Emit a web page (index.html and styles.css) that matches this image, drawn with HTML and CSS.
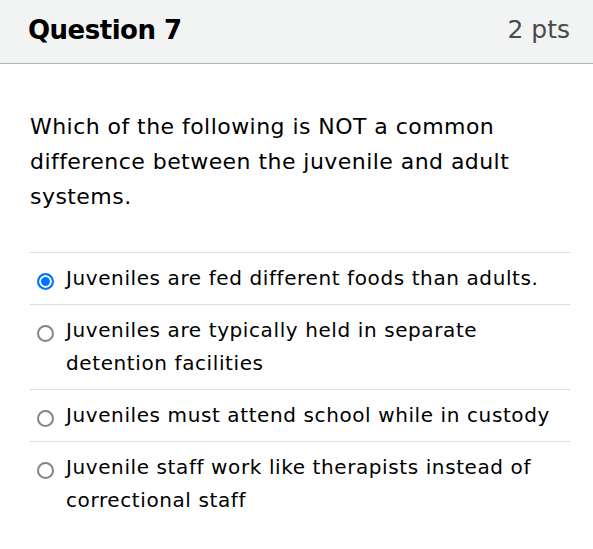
FILE: index.html
```html
<!DOCTYPE html>
<html>
<head lang="en">
    <meta charset="UTF-8">
    <title>Question 7</title>
    <link rel="stylesheet" href="styles.css">
</head>
<body>
<div class="question">
    <div class="question-header">
        <h2 class="question-title">Question 7</h2>
        <span class="question-points">2 pts</span>
    </div>
    <div class="question-body">
        <p class="question-text">Which of the following is NOT a common difference between the juvenile and adult systems.</p>
        <ul class="answers">
            <li class="answer">
                <span class="radio checked"></span>
                <span class="answer-label">Juveniles are fed different foods than adults.</span>
            </li>
            <li class="answer">
                <span class="radio"></span>
                <span class="answer-label">Juveniles are typically held in separate detention facilities</span>
            </li>
            <li class="answer">
                <span class="radio"></span>
                <span class="answer-label">Juveniles must attend school while in custody</span>
            </li>
            <li class="answer">
                <span class="radio"></span>
                <span class="answer-label">Juvenile staff work like therapists instead of correctional staff</span>
            </li>
        </ul>
    </div>
</div>
</body>
</html>
```

FILE: styles.css
```css
body {
    margin: 0;
    background: #fff;
    color: #000;
    font-family: "DejaVu Sans", sans-serif;
}
.question-header {
    height: 63px;
    background: #f2f3f3;
    border-bottom: 1px solid #b5b5b5;
    display: flex;
    align-items: center;
    justify-content: space-between;
    padding: 0 23px 0 28px;
}
.question-title {
    margin: 0;
    font-size: 26px;
    font-weight: bold;
    letter-spacing: -0.5px;
    padding-bottom: 4px;
}
.question-points {
    font-size: 25px;
    color: #4a4a4a;
    padding-bottom: 4px;
}
.question-body {
    padding: 0 23px 0 30px;
}
.question-text {
    margin: 0;
    padding: 45px 0 38px;
    font-size: 22px;
    line-height: 35px;
    letter-spacing: 0.45px;
}
.answers {
    list-style: none;
    margin: 0;
    padding: 0;
}
.answer {
    display: flex;
    align-items: flex-start;
    gap: 12px;
    border-top: 1px solid #ddd;
    padding: 9px 0 9px 7px;
    font-size: 20px;
    line-height: 33px;
    letter-spacing: 0.6px;
}
.radio {
    flex: none;
    box-sizing: border-box;
    width: 17px;
    height: 17px;
    margin-top: 11px;
    border: 2px solid #858585;
    border-radius: 50%;
}
.radio.checked {
    border-color: #0075ff;
    background: #0075ff;
    box-shadow: inset 0 0 0 2px #fff;
}
```
